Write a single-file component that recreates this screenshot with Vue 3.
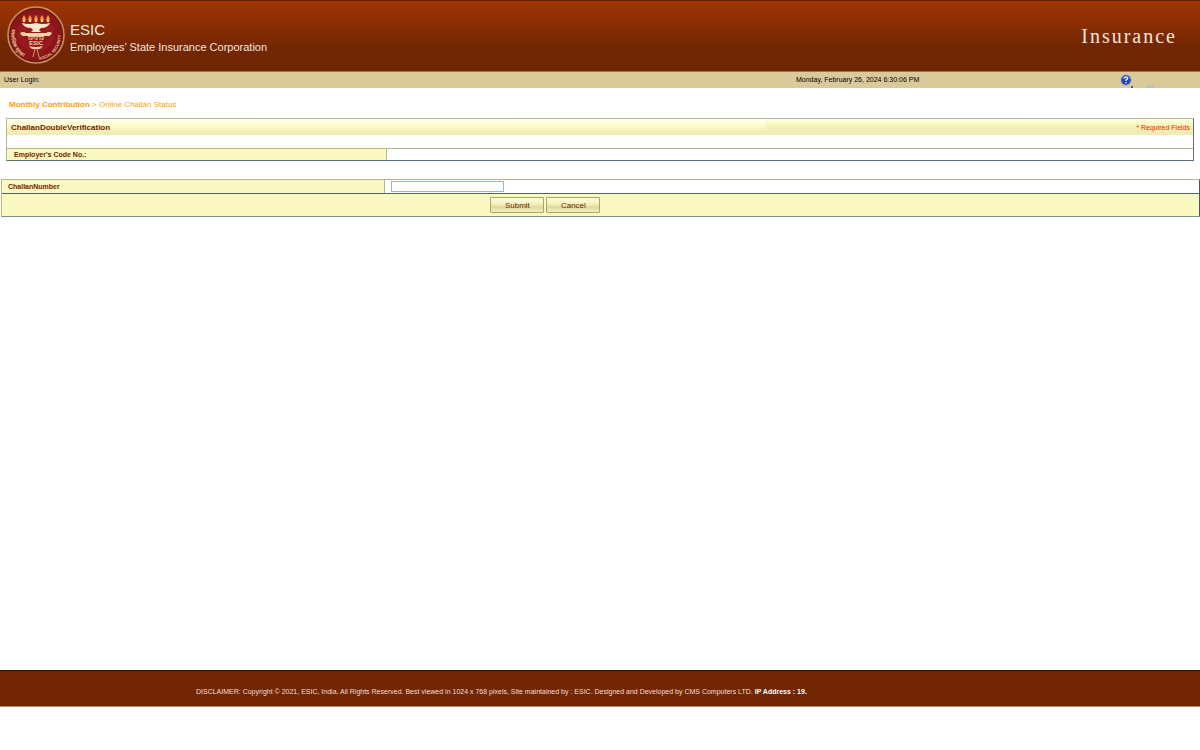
<script setup>
import { ref } from 'vue'

const challanNumber = ref('')
const flames = [24, 30, 36, 42, 48]
</script>

<template>
  <div class="page">
    <header class="banner">
      <svg class="seal" viewBox="0 0 72 72" aria-label="ESIC seal" role="img">
        <defs>
          <path id="arcLeft" d="M12 29A24.700 24.700 0 0 0 34 60" />
          <path id="arcRight" d="M39 60A24.700 24.700 0 0 0 58 24" />
        </defs>
        <circle cx="36" cy="35" r="28" fill="#8a1618" stroke="#c0935a" stroke-width="1.6" />
        <circle cx="36" cy="35" r="26.3" fill="none" stroke="#6c1812" stroke-width="1" />
        <circle cx="36" cy="33" r="19" fill="#981a1e" stroke="#8c1718" stroke-width="0.8" />
        <g v-for="x in flames" :key="x">
          <path :d="`M${x} 15Q${x + 3} 19 ${x + 1} 22H${x - 1}Q${x - 3} 19 ${x} 15Z`" fill="#f0932b" />
          <path :d="`M${x} 18L${x + 1} 22H${x - 1}Z`" fill="#fff0a8" />
        </g>
        <path d="M22 23Q29 25 36 23Q43 25 50 23Q48 28 41 28L39 30L41 32H31L33 30L31 28Q24 28 22 23Z" fill="#f9e6c8" />
        <path d="M20 33Q23 31 26 33H46Q49 31 52 33Q50 37 46 36H26Q22 37 20 33Z" fill="#f2d3a8" />
        <path d="M24 36H48Q47 43 42 46H30Q25 43 24 36Z" fill="#8f1719" />
        <path d="M28 36.500h16M29 37v3M32 37v3M34 37v2M37 37v3M40 37v3M43 37v3M30 39h2M35 39h2M41 39h2" fill="none" stroke="#f4d3a5" stroke-width="0.9" />
        <text x="36" y="45" class="sealName" text-anchor="middle">ESIC</text>
        <path d="M29 46Q36 48 43 46L40 49H32Z" fill="#f3cf9d" />
        <path d="M35 49L33 57M37 49L39 57" stroke="#d79a63" stroke-width="1" />
        <text class="sealRing hindi"><textPath href="#arcLeft">सामाजिक सुरक्षा</textPath></text>
        <text class="sealRing"><textPath href="#arcRight">SOCIAL SECURITY</textPath></text>
      </svg>
      <div class="brand">
        <div class="short">ESIC</div>
        <div class="long">Employees’ State Insurance Corporation</div>
      </div>
      <div class="product">Insurance</div>
    </header>

    <div class="userbar">
      <span class="login">User Login:</span>
      <span class="date">Monday, February 26, 2024 6:30:06 PM</span>
      <a class="help" href="#" aria-label="Help">
        <svg viewBox="0 0 12 12">
          <circle cx="6" cy="6" r="5.500" fill="#92a3cb" />
          <circle cx="6" cy="6" r="4.700" fill="#2244ad" />
          <path d="M2 5Q3 2 6 2T10 5Q6 3 2 5Z" fill="#6483d2" />
          <path d="M4.500 4.500Q4.500 3 6 3T7.500 4.500Q7.500 5.500 6 6V7M6 8v1.200" fill="none" stroke="#fff" stroke-width="1.200" />
        </svg>
      </a>
      <i class="dot"></i>
      <i class="dash"></i>
    </div>

    <main>
      <nav class="crumbs"><a href="#">Monthly Contribution</a> &gt; <span>Online Challan Status</span></nav>

      <section class="panel">
        <div class="panelHead">
          <h1>ChallanDoubleVerification</h1>
          <span>* Required Fields</span>
        </div>
        <div class="codeRow">
          <div class="caption">Employer's Code No.:</div>
          <div></div>
        </div>
      </section>

      <form class="entry" @submit.prevent>
        <div class="entryRow">
          <label for="challan">ChallanNumber</label>
          <div class="field"><input id="challan" v-model="challanNumber" type="text" /></div>
        </div>
        <div class="actions">
          <button type="submit">Submit</button>
          <button type="button" @click="challanNumber = ''">Cancel</button>
        </div>
      </form>
    </main>

    <footer>
      DISCLAIMER: Copyright © 2021, ESIC, India. All Rights Reserved. Best viewed in 1024 x 768 pixels, Site maintained by : ESIC. Designed and Developed by CMS Computers LTD. <b>IP Address : 19.</b>
    </footer>
  </div>
</template>

<style>
body {
  background: #fff;
}
</style>

<style scoped>
.page {
  box-sizing: border-box;
  min-height: 100vh;
  padding-bottom: 43px;
  display: flex;
  flex-direction: column;
  font: 7px/10px "Liberation Sans", Arial, sans-serif;
  color: #000;
}
.banner {
  box-sizing: border-box;
  height: 72px;
  display: flex;
  align-items: center;
  border-top: 1px solid #651f06;
  border-bottom: 1px solid #a2703f;
  background: linear-gradient(#9d3502, #983202 14%, #722603 66%, #702503);
  color: #f3e5dd;
}
.seal {
  width: 72px;
  height: 72px;
  flex: none;
}
.sealName {
  font: bold 6px "Liberation Sans", sans-serif;
  fill: #f6d5a6;
}
.sealRing {
  font: bold 4px "Liberation Sans", "Noto Sans", sans-serif;
  fill: #e6bd8c;
}
.sealRing.hindi {
  font-size: 5px;
}
.brand {
  margin-left: -2px;
  padding-top: 4px;
}
.short {
  font-size: 15px;
  line-height: 18px;
}
.long {
  font-size: 11px;
  line-height: 16px;
}
.product {
  margin-left: auto;
  padding-right: 23px;
  font: 20px/24px "Liberation Serif", serif;
  letter-spacing: 2px;
}
.userbar {
  height: 16px;
  display: grid;
  grid-template-columns: 66% 27% 12px 15px 1fr;
  align-items: center;
  background: #dac999;
}
.login,
.date {
  padding-left: 4px;
}
.help {
  justify-self: end;
}
.help svg {
  display: block;
  width: 12px;
  height: 12px;
  margin-right: -4px;
}
.dot {
  width: 2px;
  height: 2px;
  margin-left: 3px;
  align-self: end;
  background: #5b45c9;
}
.dash {
  width: 8px;
  height: 3px;
  margin-left: 3px;
  align-self: end;
  background: #bfc0c0;
}
.crumbs {
  padding: 12px 9px 8px;
  font-size: 8px;
  color: #ff9f00;
}
.crumbs a {
  color: inherit;
  font-weight: bold;
  text-decoration: none;
}
.panel {
  margin: 0 6px;
  border: 1px solid #b6b88b;
  border-right-color: #5d7080;
  border-bottom-color: #5d7080;
}
.panelHead {
  height: 16px;
  display: flex;
  align-items: center;
  justify-content: space-between;
  padding: 0 3px 0 4px;
  background:
    linear-gradient(#fffffa, #fffed8 25%, #fbfac3 50%, #f0edb5 75%, #f0edb8) left / 64% 100% no-repeat,
    linear-gradient(#fffff0, #fbfac3 25%, #f0edb5 60%, #f0edb8);
  color: #ff1c00;
}
.panelHead span {
  padding-top: 2px;
}
h1 {
  margin: 0;
  padding-top: 1px;
  font-size: 8px;
  color: #732300;
}
.codeRow {
  margin-top: 13px;
  height: 11px;
  display: grid;
  grid-template-columns: 32% 1fr;
  border-top: 1px solid #b6b88b;
}
.caption {
  padding: 1px 0 0 7px;
  background: #faf9c2;
  border-right: 1px solid #b6b88b;
  font-weight: bold;
  color: #732300;
}
.entry {
  margin: 18px 0 0 1px;
  border: 1px solid #b6b88b;
  border-right-color: #445a6b;
  border-bottom-color: #7d8f82;
}
.entryRow {
  height: 13px;
  display: grid;
  grid-template-columns: 32% 1fr;
}
.entryRow label {
  padding: 2px 0 0 6px;
  background: #faf9c2;
  border-right: 1px solid #b6b88b;
  font-weight: bold;
  color: #732300;
}
.field {
  display: flex;
  align-items: center;
  padding-left: 6px;
}
input {
  box-sizing: border-box;
  width: 113px;
  height: 11px;
  padding: 0 2px;
  border: 1px solid #9eb6d5;
  font: inherit;
}
.actions {
  height: 22px;
  display: flex;
  align-items: center;
  gap: 2px;
  padding-left: 40.8%;
  background: #faf9c2;
  border-top: 1px solid #56655b;
}
button {
  width: 54px;
  height: 16px;
  padding: 1px 0 0;
  border: 1px solid #aba56b;
  border-radius: 1px;
  background: linear-gradient(#fefddc, #f1edb6 50%, #ddd89a 62%, #f4f0be);
  color: #732300;
  font: 8px/12px "Liberation Sans", Arial, sans-serif;
}
footer {
  margin-top: auto;
  padding: 16px 0 9px 196px;
  border-top: 1px solid #2b1005;
  border-bottom: 1px solid #b18a76;
  background: #722603;
  color: #f5ded2;
}
footer b {
  color: #fff;
}
</style>
